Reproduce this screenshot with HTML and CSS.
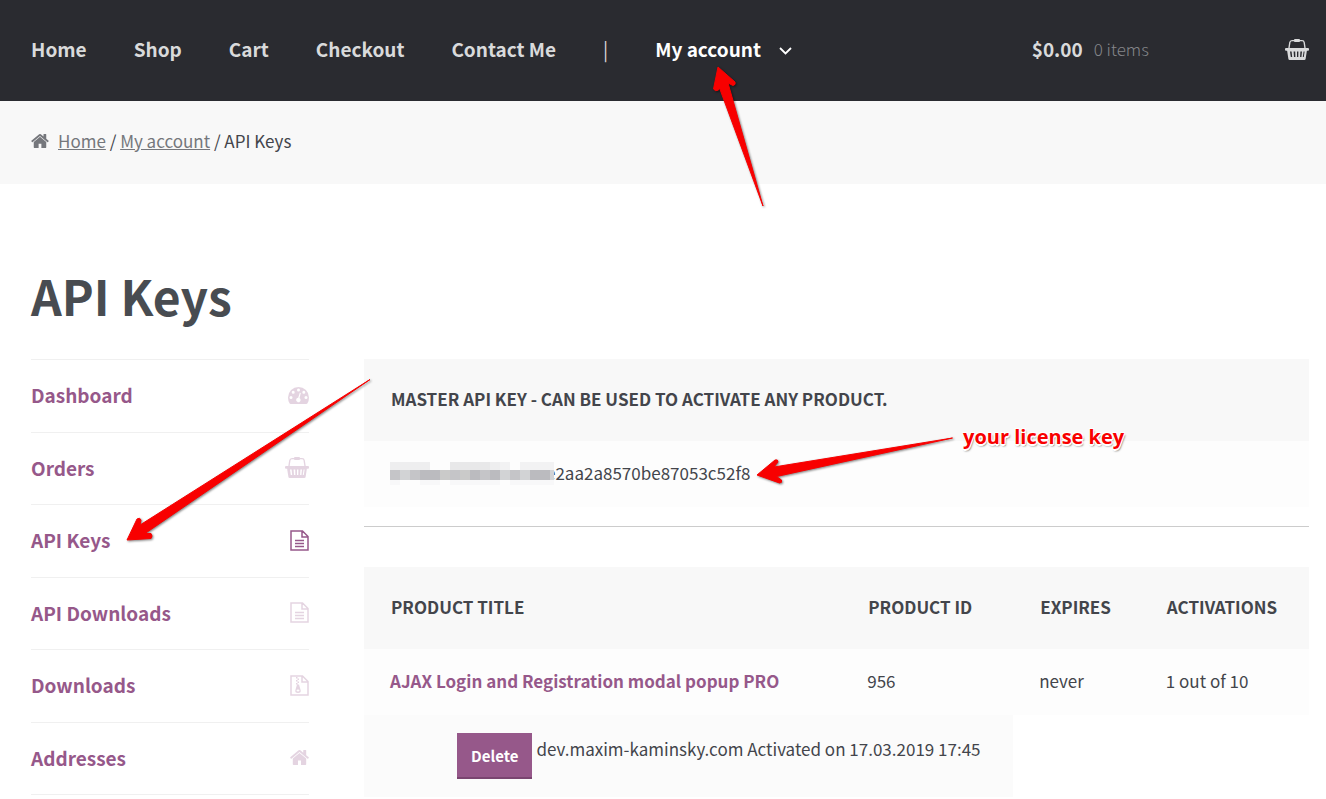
FILE: index.html
```
<!DOCTYPE html>
<html lang="en">

<head>
    <meta charset="UTF-8">
    <meta name="viewport" content="width=device-width, initial-scale=1.0">
    <title>API Keys</title>
    <link rel="stylesheet" href="styles.css">
</head>

<body>
    <!-- Shared icons -->
    <svg class="icon-defs" width="0" height="0" aria-hidden="true">
        <symbol id="icon-home" viewBox="88 250 1616 1290">
            <path d="M1472 992v480q0 26-19 45t-45 19h-384v-384h-256v384h-384q-26 0-45-19t-19-45v-480q0-1 .5-3t.5-3l575-474 575 474q1 2 1 6zm223-69l-62 74q-8 9-21 11h-3q-13 0-21-7l-692-577-692 577q-12 8-24 7-13-2-21-11l-62-74q-8-10-7-23.500t11-21.500l719-599q32-26 76-26t76 26l244 204v-195q0-14 9-23t23-9h192q14 0 23 9t9 23v408l219 182q10 8 11 21.500t-7 23.500z"/>
        </symbol>
        <symbol id="icon-basket" viewBox="0 0 24 21">
            <path d="M4 9l.8-5.500Q5.100 1.600 7 1.600h10q1.900 0 2.200 1.900L20 9" fill="none" stroke="currentColor" stroke-width="1.400"/>
            <rect x="9" y="0" width="6" height="3" rx="1"/>
            <rect x="0" y="9" width="24" height="2.800" rx="1"/>
            <path fill-rule="evenodd" d="M2 11h20l-1.400 9q-.2 1-1.200 1H4.600q-1 0-1.200-1zM5 12.500l.8 5.500h1.400l-.6-5.500zM8.600 12.500l.4 5.500h1.400l-.2-5.500zM12 12.500v5.500h1.300l.1-5.500zM15.400 12.500l-.3 5.500h1.300l.6-5.500zM18.600 12.500l-.8 5.500h1l.8-5.500z"/>
        </symbol>
        <symbol id="icon-gauge" viewBox="0 0 21 17">
            <path fill-rule="evenodd" d="M10.500 0A10.500 10.500 0 0 0 0 10.500q0 3.200 1.500 5.800.4.700 1.200.7h15.600q.8 0 1.200-.7 1.500-2.600 1.500-5.800A10.500 10.500 0 0 0 10.500 0zM3 9a1.500 1.500 0 1 1 0 3 1.500 1.500 0 0 1 0-3zM5.200 3.700a1.500 1.500 0 1 1 0 3 1.500 1.500 0 0 1 0-3zM10.500 1.500a1.500 1.500 0 1 1 0 3 1.500 1.500 0 0 1 0-3zM15.800 3.700a1.500 1.500 0 1 1 0 3 1.500 1.500 0 0 1 0-3zM18 9a1.500 1.500 0 1 1 0 3 1.500 1.500 0 0 1 0-3zM11.800 5.800l1 .3-1.300 5a2.200 2.200 0 1 1-1.300-.3z"/>
        </symbol>
        <symbol id="icon-file" viewBox="0 0 19 21">
            <path d="M1 1h11.500L18 6.500V20H1zM12 1v6h6M5 10.500h9M5 13.500h9M5 16.500h9" fill="none" stroke="currentColor" stroke-width="1.500"/>
        </symbol>
        <symbol id="icon-archive" viewBox="0 0 19 21">
            <path d="M1 1h11.500L18 6.500V20H1zM12 1v6h6" fill="none" stroke="currentColor" stroke-width="1.500"/>
            <path fill-rule="evenodd" d="M6 2h1.500v1.500H6zM7.500 3.500H9V5H7.500zM6 5h1.500v1.500H6zM7.500 6.500H9V8H7.500zM6 8h1.500v1.500H6zM7 9.500h2l1.600 5.500q.8 3-2.600 3t-2.600-3zM8 14.500q-1.500 0-1.500 1t1.500 1 1.500-1-1.500-1z"/>
        </symbol>
    </svg>

    <header class="site-header">
        <nav class="main-nav">
            <a href="#">Home</a>
            <a href="#">Shop</a>
            <a href="#">Cart</a>
            <a href="#">Checkout</a>
            <a href="#">Contact Me</a>
            <span class="divider">|</span>
            <a href="#" class="current">My account
                <svg class="chevron" viewBox="0 0 13 8"><path d="M1 1l5.500 5.500L12 1" fill="none" stroke="currentColor" stroke-width="1.800"/></svg>
                <svg class="arrow arrow-account" viewBox="708 60 60 150" aria-hidden="true"><path d="M718 67l17 15q1 3-2 3.500l-5-2.500L763 206 719.500 88l-1 2q-3 2-5-1z"/></svg>
            </a>
        </nav>
        <a href="#" class="cart">
            <span class="amount">$0.00</span>
            <span class="count">0 items</span>
            <svg class="icon-basket"><use href="#icon-basket"/></svg>
        </a>
    </header>

    <div class="breadcrumb">
        <svg class="icon-crumb"><use href="#icon-home"/></svg>
        <a href="#">Home</a>&nbsp;/&nbsp;<a href="#">My account</a>&nbsp;/&nbsp;API Keys
    </div>

    <main class="page">
        <h1>API Keys</h1>
        <div class="columns">
            <ul class="account-menu">
                <li><a href="#">Dashboard <svg class="icon-gauge"><use href="#icon-gauge"/></svg></a></li>
                <li><a href="#">Orders <svg class="icon-basket"><use href="#icon-basket"/></svg></a></li>
                <li class="active"><a href="#">API Keys <svg class="icon-file"><use href="#icon-file"/></svg></a>
                    <svg class="arrow arrow-keys" viewBox="121 370 260 180" aria-hidden="true"><path d="M128 540l10-21q3-2 4 1l-1 5L371 379.500 146 533.500l6 0q2 2.500 0 5z"/></svg>
                </li>
                <li><a href="#">API Downloads <svg class="icon-file"><use href="#icon-file"/></svg></a></li>
                <li><a href="#">Downloads <svg class="icon-file"><use href="#icon-archive"/></svg></a></li>
                <li><a href="#">Addresses <svg class="icon-house"><use href="#icon-home"/></svg></a></li>
            </ul>

            <div class="content">
                <table class="master-key">
                    <thead>
                        <tr><th>Master API Key - can be used to activate any product.</th></tr>
                    </thead>
                    <tbody>
                        <tr>
                            <td>
                                <div class="key">
                                    <svg class="key-mask" viewBox="0 0 164 23" shape-rendering="crispEdges" aria-hidden="true">
                                        <rect width="164" height="23" fill="#fdfdfd"/>
                                        <path fill="#eeeeef" d="M0 0h40v8H0zM100 0h20v8h-20z"/>
                                        <path fill="#e8e8e9" d="M60 0h40v8H60z"/>
                                        <path fill="#f2f2f3" d="M110 0h10v8h-10zM130 0h34v8h-34z"/>
                                        <path fill="#f8f8f9" d="M0 18h10v5H0zM30 18h20v5H30zM60 18h50v5H60zM120 18h44v5h-44z"/>
                                        <path fill="#c5c5c8" d="M0 8h164v10H0z"/>
                                        <path fill="#d2d3d5" d="M10 8h10v10H10zM110 8h10v10h-10zM130 8h10v10h-10zM160 8h4v10h-4z"/>
                                        <path fill="#bbbbbf" d="M30 8h20v10H30zM80 8h10v10H80zM100 8h10v10h-10zM140 8h20v10h-20z"/>
                                        <path fill="#cacac9" d="M50 8h10v10H50zM70 8h10v10H70z"/>
                                    </svg><span>e2aa2a8570be87053c52f8</span>
                                    <svg class="arrow arrow-license" viewBox="750 430 210 60" aria-hidden="true"><path d="M758 475l18-15q3-1 3 2l-4 5L953.500 438 777.500 476.500l5 3.500q1 3-2 3z"/></svg>
                                    <span class="note">your license key</span>
                                </div>
                            </td>
                        </tr>
                    </tbody>
                </table>

                <hr>

                <table class="products">
                    <colgroup>
                        <col class="col-title">
                        <col class="col-id">
                        <col class="col-expires">
                        <col>
                    </colgroup>
                    <thead>
                        <tr>
                            <th>Product Title</th>
                            <th>Product ID</th>
                            <th>Expires</th>
                            <th>Activations</th>
                        </tr>
                    </thead>
                    <tbody>
                        <tr>
                            <td><a href="#">AJAX Login and Registration modal popup PRO</a></td>
                            <td>956</td>
                            <td>never</td>
                            <td>1 out of 10</td>
                        </tr>
                        <tr>
                            <td colspan="2" class="activation">
                                <div class="activation-row">
                                    <button type="button">Delete</button>
                                    <span>dev.maxim-kaminsky.com Activated on 17.03.2019 17:45</span>
                                </div>
                            </td>
                        </tr>
                    </tbody>
                </table>
            </div>
        </div>
    </main>
</body>

</html>
```
FILE: styles.css
```
* {
    box-sizing: border-box;
}

body {
    margin: 0;
    background-color: #fff;
    color: #43454b;
    font-family: "Noto Sans CJK SC", "Open Sans", sans-serif;
    font-size: 17px;
    line-height: 28px;
}

svg {
    fill: currentColor;
}

.icon-defs {
    position: absolute;
}

/* Header */
.site-header {
    display: flex;
    align-items: center;
    background-color: #2a2b30;
    padding: 35px 17px 38px 31px;
    font-size: 19px;
}

.site-header a {
    color: #d9dadb;
    text-decoration: none;
}

.main-nav {
    display: flex;
    flex: 1;
    gap: 47px;
    font-weight: bold;
}

.divider {
    color: #d9dadb;
    font-weight: normal;
}

.main-nav .current {
    position: relative;
    color: #fff;
}

.chevron {
    width: 13px;
    height: 8px;
    margin-left: 14px;
    vertical-align: 2px;
}

.cart {
    display: flex;
    align-items: center;
    width: 21.7%;
}

.amount {
    font-weight: bold;
}

.count {
    flex: 1;
    margin-left: 11px;
    color: #85868a;
    font-size: 17px;
    font-weight: 300;
}

.icon-basket {
    width: 24px;
    height: 21px;
}

/* Breadcrumb */
.breadcrumb {
    display: flex;
    align-items: center;
    background-color: #f8f8f8;
    padding: 26px 31px 29px;
}

.breadcrumb a {
    color: #75777c;
    text-decoration: underline;
}

.icon-crumb {
    width: 18px;
    height: 14px;
    margin-right: 9px;
    color: #75777c;
}

/* Page */
.page {
    padding: 78px 17px 0 31px;
}

h1 {
    margin: 0 0 31px;
    color: #484c51;
    font-size: 48px;
    line-height: 66px;
}

.columns {
    display: flex;
    align-items: flex-start;
    gap: 55px;
}

.account-menu {
    width: 278px;
    margin: 0;
    padding: 0;
    border-top: 1px solid #f0f0f0;
    list-style: none;
    font-size: 19px;
    font-weight: bold;
    line-height: 1.5;
}

.account-menu li {
    position: relative;
    border-bottom: 1px solid #f0f0f0;
}

.account-menu a {
    display: flex;
    align-items: center;
    justify-content: space-between;
    padding: 21px 0 22px;
    color: #96588a;
    text-decoration: none;
}

.account-menu a svg {
    opacity: 0.25;
}

.account-menu .active a svg {
    opacity: 1;
}

.icon-gauge {
    width: 21px;
    height: 17px;
}

.icon-file {
    width: 19px;
    height: 21px;
}

.icon-house {
    width: 19px;
    height: 15px;
}

/* Tables */
.content {
    flex: 1;
}

table {
    width: 100%;
    border-collapse: collapse;
    table-layout: fixed;
}

th {
    background-color: #f8f8f8;
    padding: 26px 27px 28px;
    text-align: left;
    text-transform: uppercase;
    white-space: nowrap;
}

td {
    background-color: #fdfdfd;
    padding: 18px 26px 20px;
}

td a {
    color: #96588a;
    font-weight: bold;
    text-decoration: none;
}

hr {
    height: 1px;
    margin: 19px 0 40px;
    border: 0;
    background-color: #ccc;
}

.col-title {
    width: 50.5%;
}

.col-id {
    width: 18.2%;
}

.col-expires {
    width: 13.4%;
}

.key {
    position: relative;
    display: flex;
    align-items: center;
}

.key-mask {
    position: relative;
    z-index: 1;
    width: 164px;
    height: 23px;
    margin-right: -8px;
}

td.activation {
    background-color: #fbfbfb;
    padding: 18px 26px 18px 93px;
}

.activation-row {
    display: flex;
    gap: 4px;
    line-height: 32px;
}

button {
    background-color: #96588a;
    color: #fff;
    padding: 11px 14px 9px;
    border: none;
    border-bottom: 2px solid #7a4570;
    cursor: pointer;
    font-family: inherit;
    font-size: 15px;
    font-weight: bold;
    line-height: 24px;
}

/* Red pointers laid over the page */
.arrow {
    position: absolute;
    z-index: 2;
    fill: #f80000;
    stroke: #f80000;
    stroke-linejoin: round;
    filter: drop-shadow(1px 1px 1px rgba(0, 0, 0, 0.5));
    pointer-events: none;
}

.arrow-account {
    top: 25px;
    left: 53px;
    width: 60px;
    height: 150px;
}

.arrow-keys {
    top: -135px;
    left: 89px;
    width: 260px;
    height: 180px;
}

.arrow-license {
    top: -29px;
    left: 359px;
    width: 210px;
    height: 60px;
}

.note {
    position: absolute;
    top: -36px;
    left: 573px;
    color: #f80000;
    font-family: "Open Sans", sans-serif;
    font-size: 20px;
    font-weight: bold;
    text-shadow: -1px -1px 0 #fff, 1px -1px 0 #fff, -1px 1px 0 #fff, 1px 1px 0 #fff, 0 2px 0 #fff, 1px 2px 2px #555;
    white-space: nowrap;
}
```
